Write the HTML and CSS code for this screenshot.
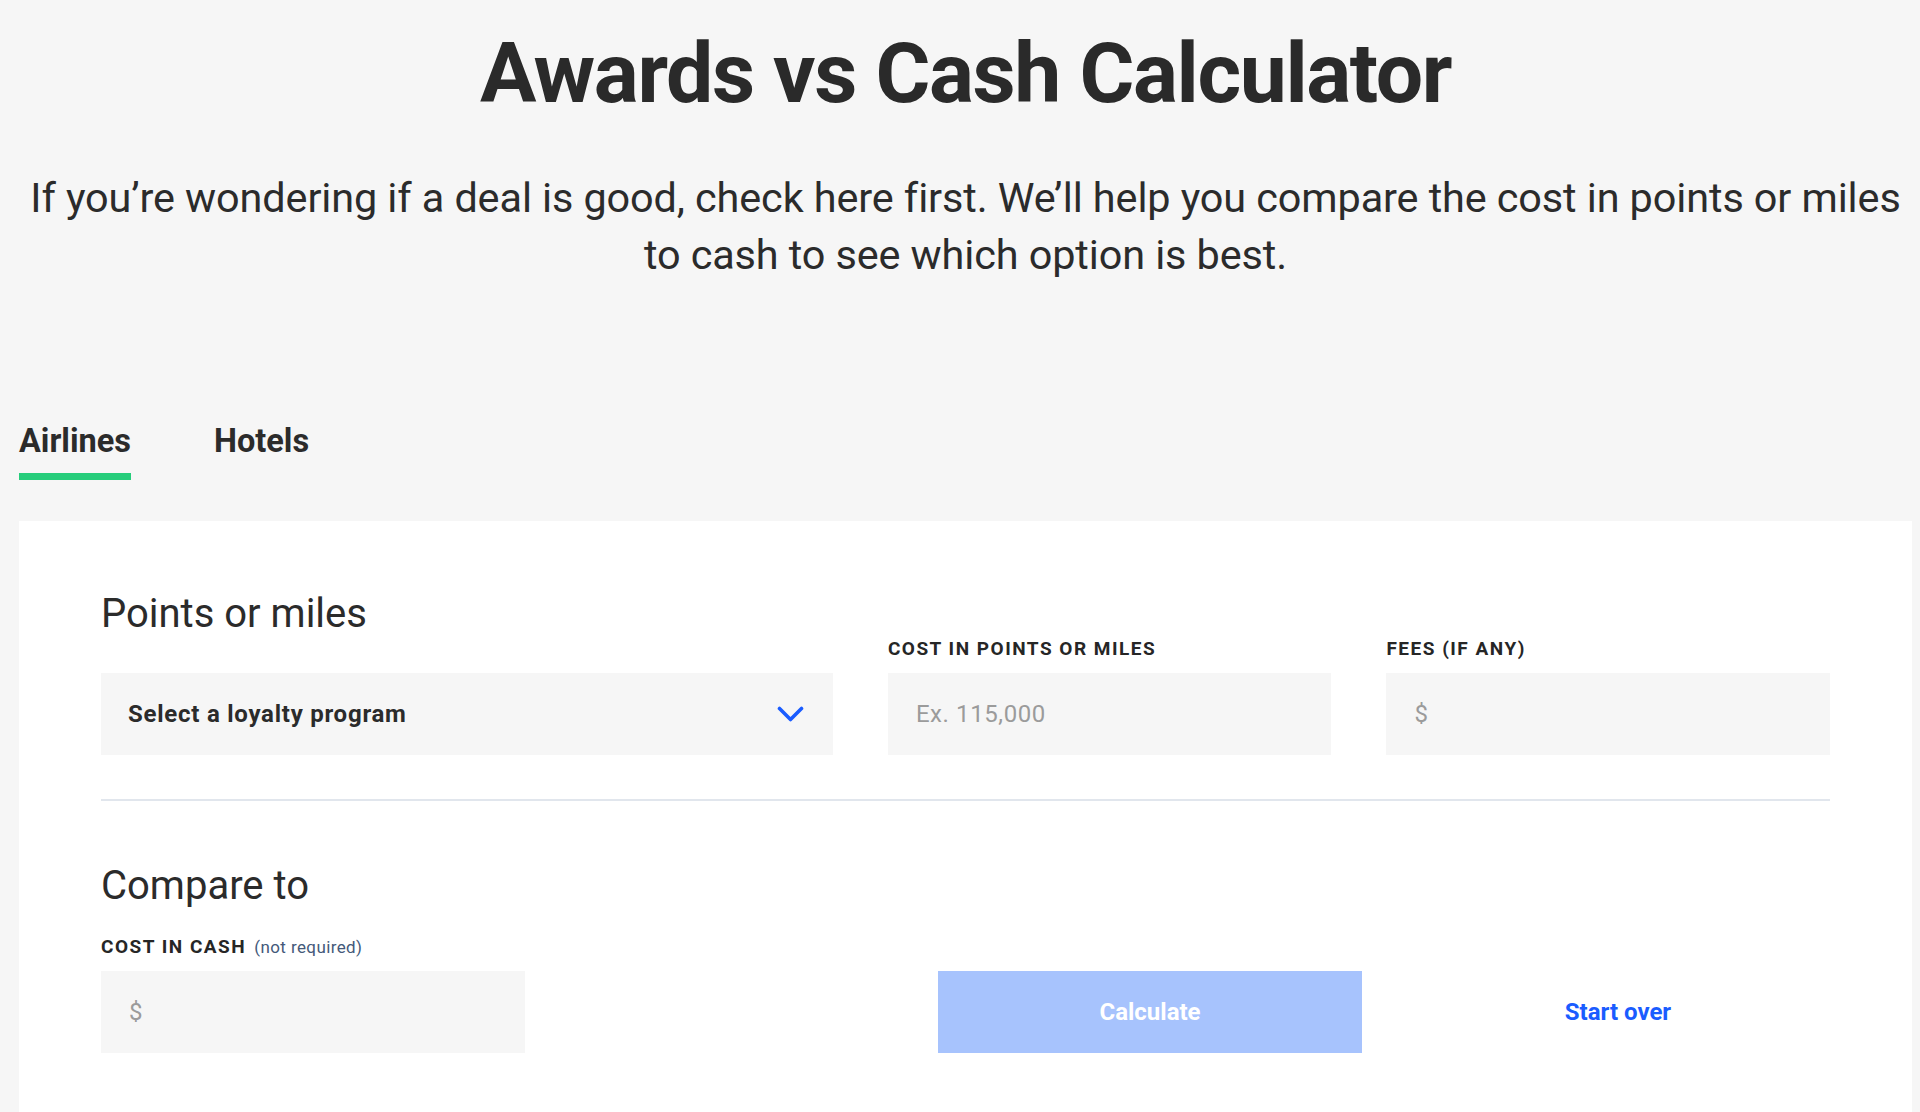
FILE: index.html
```html
<!DOCTYPE html>
<html lang="en">
<head>
<meta charset="utf-8">
<title>Awards vs Cash Calculator</title>
<link rel="stylesheet" href="styles.css">
</head>
<body>
<main class="page">
  <header class="intro">
    <h1 class="title">Awards vs Cash Calculator</h1>
    <p class="lead">If you’re wondering if a deal is good, check here first. We’ll help you compare the cost in points or miles to cash to see which option is best.</p>
  </header>

  <nav class="tabs">
    <a class="tab tab-active" href="#">Airlines</a>
    <a class="tab" href="#">Hotels</a>
  </nav>

  <section class="card">
    <div class="row-points">
      <div class="col col-program">
        <h2 class="section-title">Points or miles</h2>
        <div class="select">
          <span>Select a loyalty program</span>
          <svg class="chevron" width="27" height="17" viewBox="0 0 27 17" aria-hidden="true"><polyline points="2.5,2.5 13.5,13.5 24.5,2.5" fill="none" stroke="#1a5cff" stroke-width="3.6" stroke-linecap="round" stroke-linejoin="round"/></svg>
        </div>
      </div>
      <div class="col">
        <div class="label">COST IN POINTS OR MILES</div>
        <div class="field"><span class="placeholder">Ex. 115,000</span></div>
      </div>
      <div class="col">
        <div class="label">FEES (IF ANY)</div>
        <div class="field"><span class="placeholder">$</span></div>
      </div>
    </div>

    <hr class="divider">

    <h2 class="section-title compare-title">Compare to</h2>
    <div class="row-compare">
      <div class="col">
        <div class="label">COST IN CASH<span class="hint">(not required)</span></div>
        <div class="field"><span class="placeholder">$</span></div>
      </div>
      <div class="spacer"></div>
      <div class="btn">Calculate</div>
      <div class="link">Start over</div>
    </div>
  </section>
</main>
</body>
</html>
```

FILE: styles.css
```css
* {
  box-sizing: border-box;
}

body {
  margin: 0;
  background: #f6f6f6;
  font-family: Roboto, "Liberation Sans", Arial, sans-serif;
  color: #2b2b2b;
}

.page {
  padding: 0 8px 0 19px;
}

.intro {
  text-align: center;
}

.title {
  margin: 24px 0 0;
  font-size: 84px;
  line-height: 100px;
  font-weight: 700;
  letter-spacing: -1.4px;
  color: #2a2a2a;
}

.lead {
  margin: 46px 0 0;
  font-size: 41.4px;
  line-height: 57px;
  font-weight: 400;
  letter-spacing: -0.1px;
  color: #2b2b2b;
}

.tabs {
  display: flex;
  gap: 83px;
  margin-top: 137px;
}

.tab {
  font-size: 32.5px;
  line-height: 40px;
  font-weight: 700;
  color: #2b2b2b;
  text-decoration: none;
  padding-bottom: 12px;
  border-bottom: 7px solid transparent;
}

.tab-active {
  border-bottom-color: #26cd7b;
}

.card {
  margin-top: 41px;
  background: #ffffff;
  padding: 69px 82px 120px;
}

.row-points {
  display: grid;
  grid-template-columns: 33fr 20fr 20fr;
  column-gap: 55px;
  align-items: end;
}

.section-title {
  margin: 0;
  font-size: 40px;
  line-height: 48px;
  font-weight: 400;
  color: #2b2b2b;
}

.col-program .section-title {
  margin-bottom: 35px;
}

.label {
  font-size: 19px;
  line-height: 24px;
  font-weight: 700;
  letter-spacing: 1.5px;
  color: #262626;
  margin-bottom: 12px;
  white-space: nowrap;
}

.field,
.select {
  height: 82px;
  background: #f6f6f6;
  display: flex;
  align-items: center;
  padding: 0 28px;
  font-size: 24px;
}

.placeholder {
  color: #9b9b9b;
  letter-spacing: 0.6px;
}

.select {
  justify-content: space-between;
  padding: 0 29px 0 27px;
  font-weight: 700;
  letter-spacing: 0.75px;
  color: #2b2b2b;
}

.chevron {
  display: block;
}

.divider {
  border: 0;
  height: 2px;
  background: #e1e6ed;
  margin: 44px 0 0;
}

.compare-title {
  margin-top: 61px;
}

.row-compare {
  display: grid;
  grid-template-columns: 424px 1fr 424px 424px;
  column-gap: 44px;
  align-items: end;
  margin-top: 25px;
}

.hint {
  font-size: 17px;
  font-weight: 400;
  letter-spacing: 0.4px;
  color: #44597a;
  margin-left: 8px;
}

.btn {
  height: 82px;
  background: #a7c3fd;
  color: #ffffff;
  font-size: 24px;
  font-weight: 700;
  display: flex;
  align-items: center;
  justify-content: center;
}

.link {
  height: 82px;
  display: flex;
  align-items: center;
  justify-content: center;
  color: #1a5cff;
  font-size: 24px;
  font-weight: 700;
}
```
